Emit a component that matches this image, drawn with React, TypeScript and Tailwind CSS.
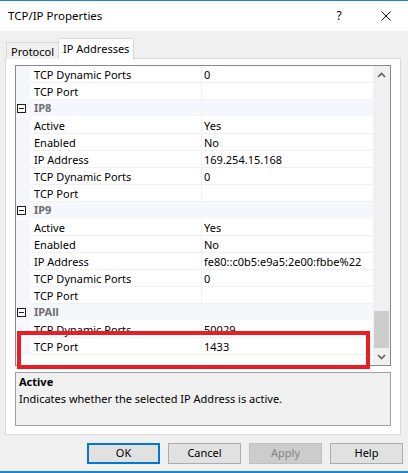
import React from "react";

type Row =
  | { cat: string }
  | { label: string; value: string };

const rows: Row[] = [
  { label: "TCP Dynamic Ports", value: "0" },
  { label: "TCP Port", value: "" },
  { cat: "IP8" },
  { label: "Active", value: "Yes" },
  { label: "Enabled", value: "No" },
  { label: "IP Address", value: "169.254.15.168" },
  { label: "TCP Dynamic Ports", value: "0" },
  { label: "TCP Port", value: "" },
  { cat: "IP9" },
  { label: "Active", value: "Yes" },
  { label: "Enabled", value: "No" },
  { label: "IP Address", value: "fe80::c0b5:e9a5:2e00:fbbe%22" },
  { label: "TCP Dynamic Ports", value: "0" },
  { label: "TCP Port", value: "" },
  { cat: "IPAll" },
  { label: "TCP Dynamic Ports", value: "50029" },
  { label: "TCP Port", value: "1433" },
];

function MinusBox() {
  return (
    <div className="ml-[1px] w-[9px] h-[9px] border border-[#1e1e1e] bg-white flex items-center justify-center">
      <div className="w-[5px] h-[1px] bg-[#1e1e1e]" />
    </div>
  );
}

function GridRow({ row }: { row: Row }) {
  if ("cat" in row) {
    return (
      <div className="flex items-center h-[17px] bg-[#f4f7fc] border-b border-white">
        <div className="w-[14px] flex items-center">
          <MinusBox />
        </div>
        <div className="pl-[4px] pt-[1px] font-bold text-[#6d6d6d]">{row.cat}</div>
      </div>
    );
  }
  return (
    <div className="flex h-[17px]">
      <div className="w-[14px] bg-[#f4f7fc]" />
      <div className="w-[172px] pl-[4px] pt-[1px] border-b border-r border-[#f0f0f0] leading-[15px] whitespace-nowrap overflow-hidden">
        {row.label}
      </div>
      <div className="flex-1 pl-[2px] pt-[1px] border-b border-[#f0f0f0] leading-[15px] whitespace-nowrap overflow-hidden">
        {row.value}
      </div>
    </div>
  );
}

function Chevron({ up }: { up?: boolean }) {
  return (
    <svg width="9" height="6" viewBox="0 0 9 6" className={up ? "" : "rotate-180"}>
      <path d="M1 5 L4.5 1.5 L8 5" fill="none" stroke="#606060" strokeWidth="1.6" />
    </svg>
  );
}

function Button({ children, primary, disabled }: { children: React.ReactNode; primary?: boolean; disabled?: boolean }) {
  const cls = primary
    ? "border-2 border-[#0078d7] bg-[#e1e1e1] text-black"
    : disabled
    ? "border border-[#bfbfbf] bg-[#cccccc] text-[#838383]"
    : "border border-[#adadad] bg-[#e1e1e1] text-black";
  return (
    <div className={`w-[73px] h-[21px] flex items-center justify-center ${cls}`}>{children}</div>
  );
}

export default function App() {
  return (
    <div
      className="w-[408px] h-[473px] bg-[#f0f0f0] border-t border-[#1883d7] border-b-2 flex flex-col text-[11px] text-black overflow-hidden"
      style={{ fontFamily: '"Noto Sans", "Liberation Sans", sans-serif' }}
    >
      {/* title bar */}
      <div className="h-[30px] bg-white flex items-center shrink-0">
        <div className="pl-[8px] flex-1 text-[11.5px]">TCP/IP Properties</div>
        <div className="w-[20px] text-center text-[12px] mr-[32px]">?</div>
        <svg width="10" height="10" viewBox="0 0 10 10" className="mr-[17px]">
          <path d="M0.5 0.5 L9.5 9.5 M9.5 0.5 L0.5 9.5" stroke="#111" strokeWidth="1" />
        </svg>
      </div>

      {/* tabs */}
      <div className="flex items-end h-[21px] mt-[7px] pl-[6px] shrink-0 relative z-10">
        <div className="h-[17px] px-[4px] border border-b-0 border-r-0 border-[#d9d9d9] bg-[#f0f0f0] flex items-center leading-none">
          Protocol
        </div>
        <div className="h-[21px] px-[4px] border border-b-0 border-[#d9d9d9] bg-white flex items-start pt-[2px] leading-[16px]">
          IP Addresses
        </div>
      </div>

      {/* panel */}
      <div className="relative ml-[5px] w-[396px] h-[377px] -mt-[1px] border border-[#d9d9d9] bg-white pt-[6px] pl-[9px] shrink-0">
        <div className="w-[376px] h-[301px] border border-[#828790] bg-white flex">
          <div className="flex-1 flex flex-col overflow-hidden">
            {rows.map((r, i) => (
              <GridRow key={i} row={r} />
            ))}
          </div>
          <div className="w-[17px] bg-[#f0f0f0] flex flex-col items-center">
            <div className="h-[17px] flex items-center justify-center">
              <Chevron up />
            </div>
            <div className="flex-1 w-full flex flex-col justify-end px-[1px]">
              <div className="h-[37px] bg-[#cdcdcd]" />
            </div>
            <div className="h-[17px] flex items-center justify-center">
              <Chevron />
            </div>
          </div>
        </div>

        {/* description */}
        <div className="mt-[6px] w-[376px] h-[54px] border border-[#a0a0a0] bg-[#f0f0f0] px-[3px]">
          <div className="font-bold leading-[16px] pt-[1px]">Active</div>
          <div className="leading-[16px] mt-[1px]">Indicates whether the selected IP Address is active.</div>
        </div>

        {/* highlight annotation */}
        <div className="absolute left-[11px] top-[272px] w-[353px] h-[38px] border-4 border-[#ed1c24]" />
      </div>

      {/* buttons */}
      <div className="flex gap-[8px] mt-[8px] pl-[87px]">
        <Button primary>OK</Button>
        <Button>Cancel</Button>
        <Button disabled>Apply</Button>
        <Button>Help</Button>
      </div>
    </div>
  );
}
